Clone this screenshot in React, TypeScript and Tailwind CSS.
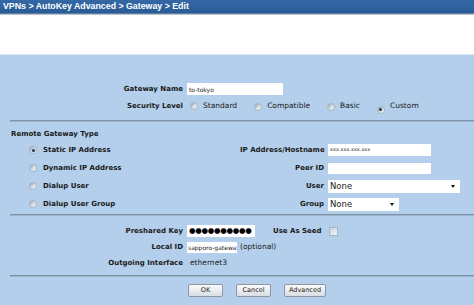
import React from 'react';

const label = "text-[7px] font-bold text-[#1a1a1a] whitespace-nowrap";
const plain = "text-[7.5px] text-[#1a1a1a] whitespace-nowrap";

function Radio({ checked }: { checked?: boolean }) {
  return (
    <span className="inline-flex w-[8px] h-[8px] rounded-full bg-gradient-to-br from-[#8d9aa9] via-[#d6dde5] to-[#f3f6f9] border border-[#a9b4c1] items-center justify-center shrink-0">
      {checked && <span className="w-[3px] h-[3px] rounded-full bg-[#25364a]" />}
    </span>
  );
}

function Separator() {
  return (
    <div className="ml-[10px] flex flex-col">
      <div className="h-[1px] bg-[#7d92a8]" />
      <div className="h-[1px] bg-[#9fb3c8]" />
    </div>
  );
}

function Select({ width, value }: { width: string; value: string }) {
  return (
    <div className={`${width} h-[13px] bg-white flex items-center justify-between pl-[2px] pr-[5px]`}>
      <span className="text-[8.5px] text-[#222]">{value}</span>
      <span className="w-0 h-0 border-l-[2.5px] border-r-[2.5px] border-t-[3px] border-l-transparent border-r-transparent border-t-[#111]" />
    </div>
  );
}

function Button({ width, children }: { width: string; children: React.ReactNode }) {
  return (
    <button className={`${width} h-[13px] rounded-[2px] border border-[#8c96a3] bg-gradient-to-b from-[#fbfbfb] to-[#d9dde2] text-[6.5px] text-[#222] flex items-center justify-center`}>
      {children}
    </button>
  );
}

export default function App() {
  return (
    <div className="w-[474px] h-[305px] bg-[#b4cfeb] flex flex-col overflow-hidden font-['DejaVu_Sans',sans-serif]">
      {/* breadcrumb */}
      <div className="h-[13px] bg-gradient-to-b from-[#3469a6] to-[#2a5b96] flex items-center pl-[3px]">
        <span className="text-white font-bold text-[8.8px] font-['Liberation_Sans',sans-serif]">
          VPNs &gt; AutoKey Advanced &gt; Gateway &gt; Edit
        </span>
      </div>
      <div className="h-[1px] bg-[#5f7fa5]" />
      <div className="h-[1px] bg-[#b9c3cf]" />
      <div className="h-[39px] bg-white" />
      <div className="h-[1px] bg-[#dde7f2]" />

      {/* top rows */}
      <div className="pt-[27px] flex flex-col">
        <div className="h-[14px] flex items-center">
          <div className={`w-[183px] text-right ${label}`}>Gateway Name</div>
          <div className="ml-[4px] w-[96px] h-[12px] bg-white flex items-center pl-[2px]">
            <span className="text-[6px] text-[#222]">to-tokyo</span>
          </div>
        </div>
        <div className="h-[18px] mt-[1px] flex items-center">
          <div className={`w-[183px] text-right ${label}`}>Security Level</div>
          <div className="ml-[7px] flex items-center">
            <Radio />
            <span className={`ml-[5px] ${plain}`}>Standard</span>
            <span className="ml-[17px]"><Radio /></span>
            <span className={`ml-[5px] ${plain}`}>Compatible</span>
            <span className="ml-[17px]"><Radio /></span>
            <span className={`ml-[5px] ${plain}`}>Basic</span>
            <span className="ml-[17px]"><Radio checked /></span>
            <span className={`ml-[5px] ${plain}`}>Custom</span>
          </div>
        </div>
      </div>

      <div className="mt-[5px]"><Separator /></div>

      {/* remote gateway type */}
      <div className={`pl-[11px] mt-[7px] h-[10px] flex items-center ${label}`}>Remote Gateway Type</div>
      <div className="mt-[2px] grid grid-cols-[240px_1fr] grid-rows-[18px_18px_18px_18px]">
        <div className="flex items-center pl-[29px] gap-[6px]"><Radio checked /><span className={label}>Static IP Address</span></div>
        <div className="flex items-center">
          <span className={`w-[84px] text-right ${label}`}>IP Address/Hostname</span>
          <div className="ml-[4px] w-[103px] h-[12px] bg-white flex items-center pl-[2px]">
            <span className="text-[5px] text-[#333]">xxx.xxx.xxx.xxx</span>
          </div>
        </div>
        <div className="flex items-center pl-[29px] gap-[6px]"><Radio /><span className={label}>Dynamic IP Address</span></div>
        <div className="flex items-center">
          <span className={`w-[84px] text-right ${label}`}>Peer ID</span>
          <div className="ml-[4px] w-[103px] h-[11px] bg-white" />
        </div>
        <div className="flex items-center pl-[29px] gap-[6px]"><Radio /><span className={label}>Dialup User</span></div>
        <div className="flex items-center">
          <span className={`w-[84px] text-right ${label}`}>User</span>
          <div className="ml-[4px]"><Select width="w-[132px]" value="None" /></div>
        </div>
        <div className="flex items-center pl-[29px] gap-[6px]"><Radio /><span className={label}>Dialup User Group</span></div>
        <div className="flex items-center">
          <span className={`w-[84px] text-right ${label}`}>Group</span>
          <div className="ml-[4px]"><Select width="w-[71px]" value="None" /></div>
        </div>
      </div>

      <div className="mt-[1px]"><Separator /></div>

      {/* key rows */}
      <div className="mt-[7px] flex flex-col">
        <div className="h-[16px] flex items-center">
          <div className={`w-[183px] text-right ${label}`}>Preshared Key</div>
          <div className="ml-[4px] w-[68px] h-[12px] bg-white flex items-center pl-[2px] overflow-hidden">
            <span className="text-[7.5px] leading-none tracking-[-0.3px] text-black whitespace-nowrap">●●●●●●●●●●</span>
          </div>
          <span className={`ml-[18px] ${label}`}>Use As Seed</span>
          <span className="ml-[7px] w-[9px] h-[9px] bg-gradient-to-br from-[#c9d1da] to-[#f4f6f8] border border-[#aab4c0]" />
        </div>
        <div className="h-[16px] flex items-center">
          <div className={`w-[183px] text-right ${label}`}>Local ID</div>
          <div className="ml-[4px] w-[50px] h-[11px] bg-white flex items-center pl-[1px] overflow-hidden">
            <span className="text-[6px] text-[#222] whitespace-nowrap">sapporo-gateway</span>
          </div>
          <span className={`ml-[3px] ${plain}`}>(optional)</span>
        </div>
        <div className="h-[16px] flex items-center">
          <div className={`w-[183px] text-right ${label}`}>Outgoing Interface</div>
          <span className={`ml-[7px] ${plain}`}>ethernet3</span>
        </div>
      </div>

      <div className="mt-[4px]"><Separator /></div>

      <div className="mt-[7px] flex items-center pl-[188px] gap-[13px]">
        <Button width="w-[35px]">OK</Button>
        <Button width="w-[35px]">Cancel</Button>
        <Button width="w-[42px]">Advanced</Button>
      </div>
    </div>
  );
}
